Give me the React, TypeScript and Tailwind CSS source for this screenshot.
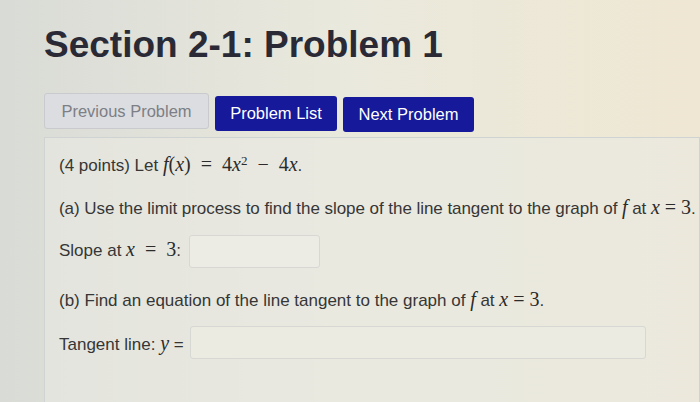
import React from 'react';

const M = ({ children }: { children: React.ReactNode }) => (
  <span className="font-['Liberation_Serif',serif] text-[20px] text-[#2b2b2b]">{children}</span>
);
const I = ({ children }: { children: React.ReactNode }) => <i className="italic">{children}</i>;
const Op = ({ children }: { children: React.ReactNode }) => <span className="mx-[5px]">{children}</span>;
const WideOp = ({ children }: { children: React.ReactNode }) => <span className="mx-[10px]">{children}</span>;

export default function App() {
  return (
    <div className="w-[700px] h-[402px] overflow-hidden bg-linear-to-r from-[#d9dbd6] via-[#eae9dd] to-[#efe7d3] font-['Liberation_Sans',Arial,sans-serif] text-[#333]">
      <div className="pl-[44px] pt-[20px]">
        <h1 className="text-[37px] font-bold text-[#2a2a36] leading-[50px]">Section 2-1: Problem 1</h1>

        <div className="mt-[23px] flex gap-[6px] text-[16.5px]">
          <div className="w-[165px] h-[36px] flex items-center justify-center rounded-[3px] border border-[#c9cacd] bg-[#dcdde0] text-[#7c7f86]">
            Previous Problem
          </div>
          <div className="w-[122px] h-[35px] mt-[3px] flex items-center justify-center rounded-[3px] bg-[#15199a] text-white">
            Problem List
          </div>
          <div className="w-[131px] h-[35px] mt-[4px] flex items-center justify-center rounded-[3px] bg-[#15199a] text-white">
            Next Problem
          </div>
        </div>

        <div className="mt-[5px] border border-[#cfd3d2] bg-[#e9eae2]/60 pl-[14px] pt-[13px] pb-[60px] text-[17px] text-[#363636]">
          <p className="h-[26px] leading-[26px]">
            (4 points) Let <M><I>f</I>(<I>x</I>)<WideOp>=</WideOp>4<I>x</I><sup className="text-[13px]">2</sup><WideOp>−</WideOp>4<I>x</I></M>.
          </p>
          <p className="mt-[17px] h-[26px] leading-[26px] whitespace-nowrap tracking-[-0.05px]">
            (a) Use the limit process to find the slope of the line tangent to the graph of <M><I>f</I></M> at <M><I>x</I><Op>=</Op>3</M>.
          </p>
          <div className="mt-[15px] flex items-center">
            <span className="-mt-[6px]">Slope at <M><I>x</I><WideOp>=</WideOp>3</M>:</span>
            <div className="ml-[8px] w-[131px] h-[33px] rounded-[3px] border border-[#d7d8d3] bg-[#ecece4]" />
          </div>
          <p className="mt-[18px] h-[26px] leading-[26px]">
            (b) Find an equation of the line tangent to the graph of <M><I>f</I></M> at <M><I>x</I><Op>=</Op>3</M>.
          </p>
          <div className="mt-[14px] flex items-center">
            <span>Tangent line: <M><I>y</I></M> =</span>
            <div className="ml-[6px] w-[456px] h-[33px] rounded-[3px] border border-[#d7d8d3] bg-[#ecebe2]" />
          </div>
        </div>
      </div>
    </div>
  );
}
